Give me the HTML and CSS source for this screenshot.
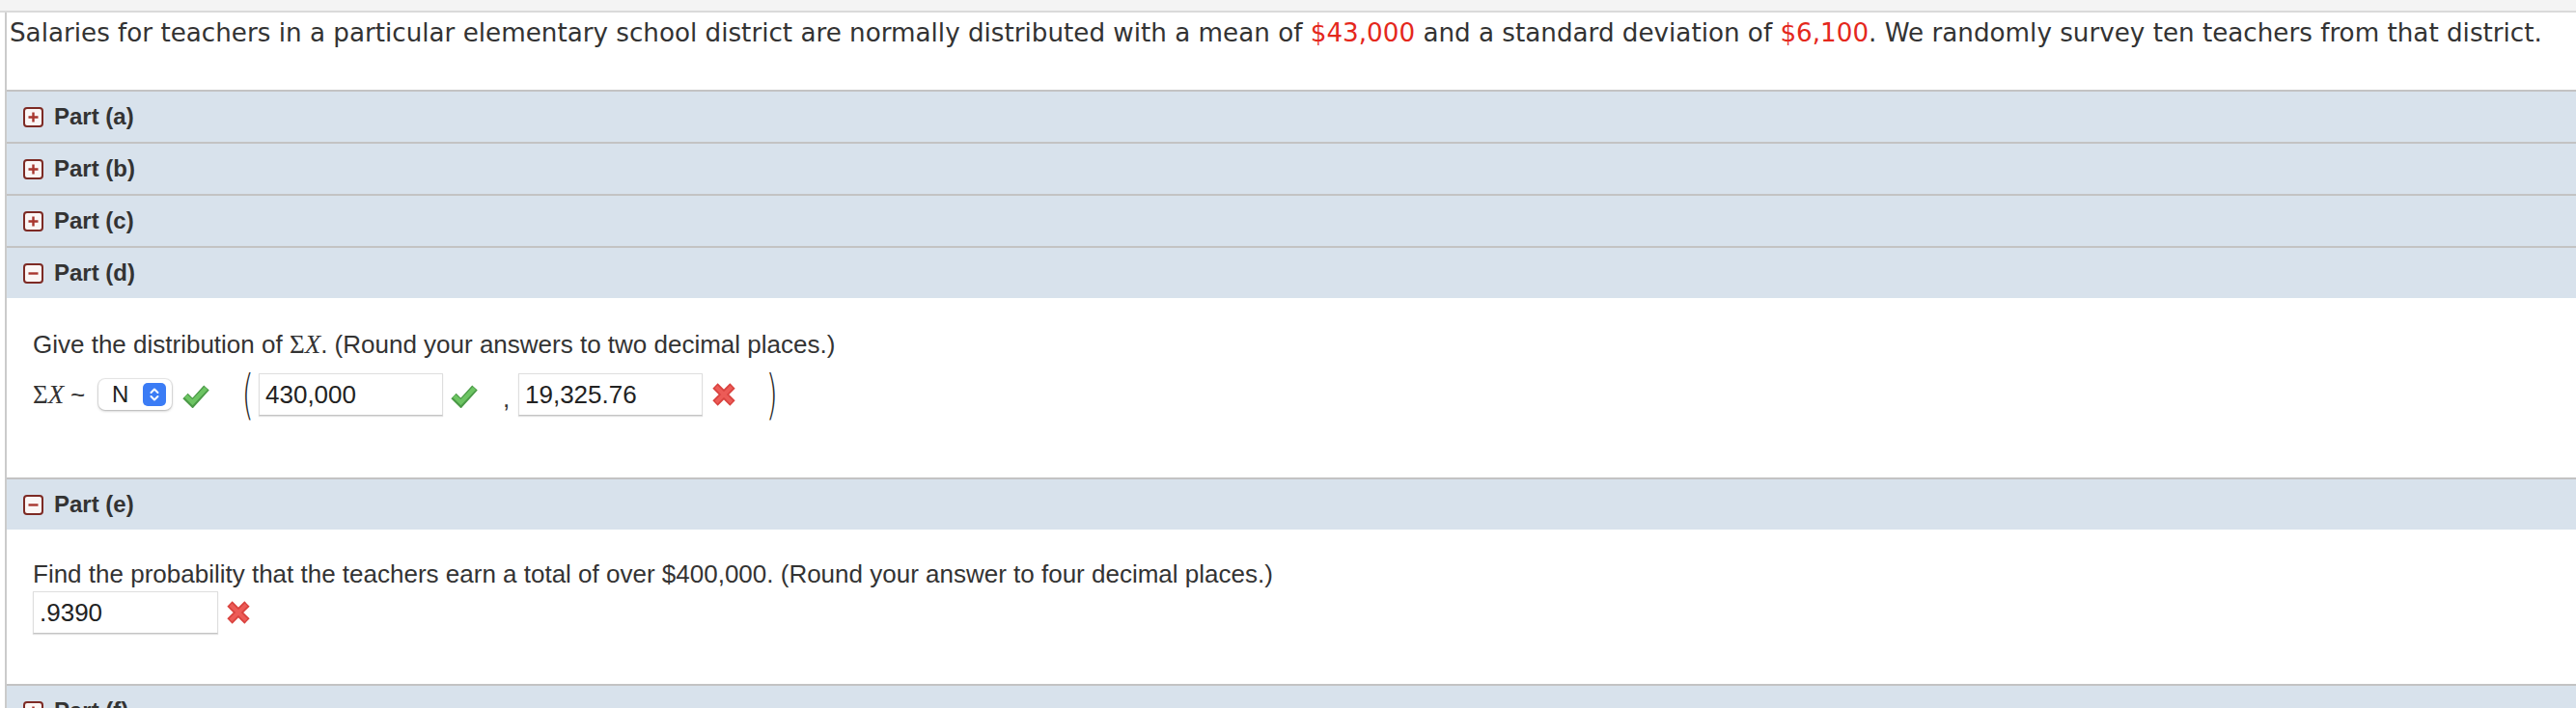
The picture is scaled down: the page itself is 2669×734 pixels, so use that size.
FILE: index.html
```html
<!DOCTYPE html>
<html>
<head>
<meta charset="utf-8">
<link rel="stylesheet" href="styles.css">
</head>
<body>
<div class="topbar"></div>
<div class="page">
  <div class="question">Salaries for teachers in a particular elementary school district are normally distributed with a mean of <span class="red">$43,000</span> and a standard deviation of <span class="red">$6,100</span>. We randomly survey ten teachers from that district.</div>

  <div class="part">
    <div class="part-head">
      <svg class="toggle" width="21" height="21" viewBox="0 0 21 21"><rect x="1" y="1" width="19" height="19" rx="3" fill="#fbf6f5" stroke="#7d2a24" stroke-width="2"/><path d="M5.5 10.5H15.5M10.5 5.5V15.5" stroke="#a8362e" stroke-width="2.4"/></svg>
      <span>Part (a)</span>
    </div>
  </div>
  <div class="part">
    <div class="part-head">
      <svg class="toggle" width="21" height="21" viewBox="0 0 21 21"><rect x="1" y="1" width="19" height="19" rx="3" fill="#fbf6f5" stroke="#7d2a24" stroke-width="2"/><path d="M5.5 10.5H15.5M10.5 5.5V15.5" stroke="#a8362e" stroke-width="2.4"/></svg>
      <span>Part (b)</span>
    </div>
  </div>
  <div class="part">
    <div class="part-head">
      <svg class="toggle" width="21" height="21" viewBox="0 0 21 21"><rect x="1" y="1" width="19" height="19" rx="3" fill="#fbf6f5" stroke="#7d2a24" stroke-width="2"/><path d="M5.5 10.5H15.5M10.5 5.5V15.5" stroke="#a8362e" stroke-width="2.4"/></svg>
      <span>Part (c)</span>
    </div>
  </div>
  <div class="part">
    <div class="part-head">
      <svg class="toggle" width="21" height="21" viewBox="0 0 21 21"><rect x="1" y="1" width="19" height="19" rx="3" fill="#fbf6f5" stroke="#7d2a24" stroke-width="2"/><path d="M5.5 10.5H15.5" stroke="#a8362e" stroke-width="2.4"/></svg>
      <span>Part (d)</span>
    </div>
    <div class="part-body body-d">
      <p class="prompt">Give the distribution of <span class="math">Σ<i>X</i></span>. (Round your answers to two decimal places.)</p>
      <div class="answer-row">
        <span class="math lead">Σ<i>X</i> <span class="tilde">~</span></span>
        <span class="select"><span class="sel-val">N</span>
          <svg class="sel-icon" width="24" height="24" viewBox="0 0 24 24"><rect width="24" height="24" rx="5" fill="#3b7cf5"/><path d="M8.5 10L12 6.5L15.5 10M8.5 14L12 17.5L15.5 14" fill="none" stroke="#fff" stroke-width="2" stroke-linecap="round" stroke-linejoin="round"/></svg>
        </span>
        <svg class="check c1" width="28" height="27" viewBox="0 0 28 27"><path d="M3 14.5L10.5 22L25 6" fill="none" stroke="#4b9a47" stroke-width="7.5" stroke-linejoin="miter"/><path d="M3.6 14.5L10.5 21.2L24.4 6.4" fill="none" stroke="#6dc463" stroke-width="4.4"/></svg>
        <span class="paren lp">(</span>
        <span class="input w1">430,000</span>
        <svg class="check c2" width="28" height="27" viewBox="0 0 28 27"><path d="M3 14.5L10.5 22L25 6" fill="none" stroke="#4b9a47" stroke-width="7.5" stroke-linejoin="miter"/><path d="M3.6 14.5L10.5 21.2L24.4 6.4" fill="none" stroke="#6dc463" stroke-width="4.4"/></svg>
        <span class="comma">,</span>
        <span class="input w2">19,325.76</span>
        <svg class="cross x1" width="28" height="26" viewBox="0 0 28 26"><path d="M5 4L23 22M23 4L5 22" stroke="#d9423e" stroke-width="7.5"/><path d="M6 5L22 21M22 5L6 21" stroke="#ec5b57" stroke-width="4"/></svg>
        <span class="paren rp">)</span>
      </div>
    </div>
  </div>
  <div class="part">
    <div class="part-head">
      <svg class="toggle" width="21" height="21" viewBox="0 0 21 21"><rect x="1" y="1" width="19" height="19" rx="3" fill="#fbf6f5" stroke="#7d2a24" stroke-width="2"/><path d="M5.5 10.5H15.5" stroke="#a8362e" stroke-width="2.4"/></svg>
      <span>Part (e)</span>
    </div>
    <div class="part-body body-e">
      <p class="prompt">Find the probability that the teachers earn a total of over $400,000. (Round your answer to four decimal places.)</p>
      <div class="answer-line">
        <span class="input w3">.9390</span>
        <svg class="cross x2" width="28" height="26" viewBox="0 0 28 26"><path d="M5 4L23 22M23 4L5 22" stroke="#d9423e" stroke-width="7.5"/><path d="M6 5L22 21M22 5L6 21" stroke="#ec5b57" stroke-width="4"/></svg>
      </div>
    </div>
  </div>
  <div class="part">
    <div class="part-head">
      <svg class="toggle" width="21" height="21" viewBox="0 0 21 21"><rect x="1" y="1" width="19" height="19" rx="3" fill="#fbf6f5" stroke="#7d2a24" stroke-width="2"/><path d="M5.5 10.5H15.5M10.5 5.5V15.5" stroke="#a8362e" stroke-width="2.4"/></svg>
      <span>Part (f)</span>
    </div>
  </div>
</div>
</body>
</html>
```

FILE: styles.css
```css
* { box-sizing: border-box; }
html, body { margin: 0; padding: 0; background: #fff; }
body { font-family: "Liberation Sans", Arial, sans-serif; color: #333; overflow: hidden; height: 734px; }

.topbar { height: 13px; background: #f4f4f4; border-bottom: 2px solid #dadada; }

.page { margin-left: 5px; border-left: 2px solid #cbcbcb; min-height: 800px; }

.question {
  height: 80px;
  padding: 6px 0 0 3px;
  font-family: "DejaVu Sans", Verdana, sans-serif;
  font-size: 26.2px;
  line-height: 30px;
  color: #333;
  white-space: nowrap;
}
.red { color: #e4281c; }

.part-head {
  height: 54px;
  border-top: 2px solid #c3c3c3;
  background: #d8e2ec;
  display: flex;
  align-items: center;
  padding-left: 17px;
  font-weight: bold;
  font-size: 24px;
  color: #333;
}
.toggle { margin-right: 11px; flex: none; }

.part-body { padding-left: 27px; }
.body-d { padding-top: 33px; height: 186px; }
.body-e { padding-top: 31px; height: 160px; }

.prompt { margin: 0; font-size: 26px; line-height: 30px; color: #333; white-space: nowrap; }
.math { font-family: "Liberation Serif", "Times New Roman", serif; font-size: 27px; }
.math i { font-style: italic; }
.tilde { font-family: "Liberation Sans", Arial, sans-serif; font-size: 26px; }

.answer-row { display: flex; align-items: center; height: 58px; margin-top: 8px; }
.lead { width: 68px; white-space: nowrap; }

.select {
  display: inline-flex; align-items: center; justify-content: space-between;
  width: 76px; height: 32px;
  border-radius: 7px; background: #fff;
  box-shadow: 0 0 0 1px rgba(0,0,0,0.07), 0 1px 3px rgba(0,0,0,0.28);
  padding: 0 6px 0 14px;
  font-size: 24px; color: #222;
}

.check, .cross { flex: none; }
.c1 { margin-left: 11px; }
.lp { margin-left: 30px; }
.c2 { margin-left: 8px; }
.comma { margin-left: 26px; width: 16px; font-size: 26px; color: #333; position: relative; top: 4px; }
.x1 { margin-left: 8px; }
.rp { margin-left: 26px; }

.paren {
  display: inline-block; width: 17px; text-align: center;
  font-family: "DejaVu Sans", sans-serif; font-weight: 200;
  font-size: 56px; line-height: 58px; color: #2a2a2a;
  transform: scaleX(0.55);
}

.input {
  display: inline-flex; align-items: center;
  height: 44px; padding-left: 6px;
  background: #fff;
  border: 1px solid #dedede;
  border-bottom-color: #c4c4c4;
  box-shadow: 0 1px 1px rgba(0,0,0,0.12);
  font-size: 26px; color: #222;
}
.w1 { width: 191px; margin-left: 4px; }
.w2 { width: 191px; }
.w3 { width: 192px; }

.answer-line { display: flex; align-items: center; margin-top: 3px; }
.x2 { margin-left: 7px; }
```
